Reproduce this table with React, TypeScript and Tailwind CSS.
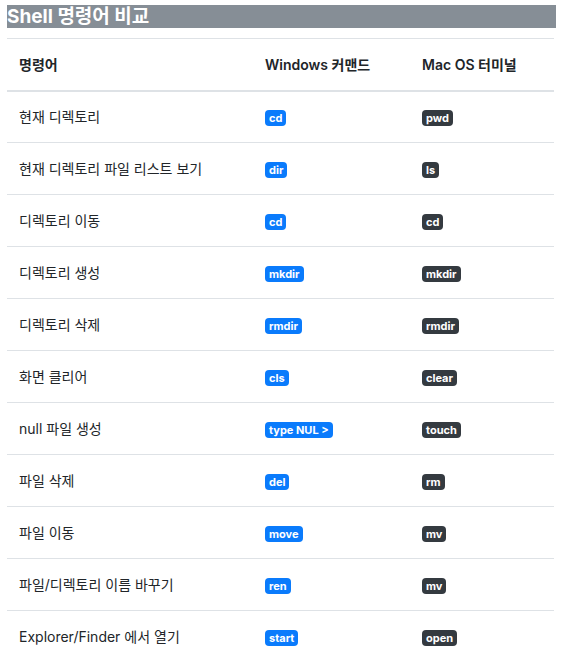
import React from 'react';

const rows: { label: string; win: string; mac: string }[] = [
  { label: '현재 디렉토리', win: 'cd', mac: 'pwd' },
  { label: '현재 디렉토리 파일 리스트 보기', win: 'dir', mac: 'ls' },
  { label: '디렉토리 이동', win: 'cd', mac: 'cd' },
  { label: '디렉토리 생성', win: 'mkdir', mac: 'mkdir' },
  { label: '디렉토리 삭제', win: 'rmdir', mac: 'rmdir' },
  { label: '화면 클리어', win: 'cls', mac: 'clear' },
  { label: 'null 파일 생성', win: 'type NUL >', mac: 'touch' },
  { label: '파일 삭제', win: 'del', mac: 'rm' },
  { label: '파일 이동', win: 'move', mac: 'mv' },
  { label: '파일/디렉토리 이름 바꾸기', win: 'ren', mac: 'mv' },
  { label: 'Explorer/Finder 에서 열기', win: 'start', mac: 'open' },
];

const Badge = ({ children, dark }: { children: React.ReactNode; dark?: boolean }) => (
  <span
    className={
      'inline-block rounded-[4px] px-[4px] py-[2.5px] text-[11px] font-bold leading-none text-white align-middle ' +
      (dark ? 'bg-[#343a40]' : 'bg-[#0a7bfc]')
    }
  >
    {children}
  </span>
);

export default function App() {
  return (
    <div
      className="min-h-[652px] bg-white px-[7px] pt-[5px] text-[#212529]"
      style={{ fontFamily: 'Inter, "Noto Sans CJK KR", sans-serif' }}
    >
      <h5 className="h-[23px] bg-[#868e96] text-[19px] font-bold leading-[23px] text-white">
        Shell 명령어 비교
      </h5>

      <table className="mt-[10px] w-[547px] table-fixed border-collapse text-[14px]">
        <colgroup>
          <col className="w-[246px]" />
          <col className="w-[157px]" />
          <col className="w-[144px]" />
        </colgroup>
        <thead>
          <tr className="h-[52px] border-t border-b-2 border-[#dee2e6]">
            <th className="px-3 text-left font-semibold">명령어</th>
            <th className="px-3 text-left font-semibold">Windows 커맨드</th>
            <th className="px-3 text-left font-semibold">Mac OS 터미널</th>
          </tr>
        </thead>
        <tbody>
          {rows.map((r, i) => (
            <tr key={i} className="h-[52px] border-t border-[#dee2e6] first:border-t-0">
              <td className="px-3">{r.label}</td>
              <td className="px-3">
                <Badge>{r.win}</Badge>
              </td>
              <td className="px-3">
                <Badge dark>{r.mac}</Badge>
              </td>
            </tr>
          ))}
        </tbody>
      </table>
    </div>
  );
}
